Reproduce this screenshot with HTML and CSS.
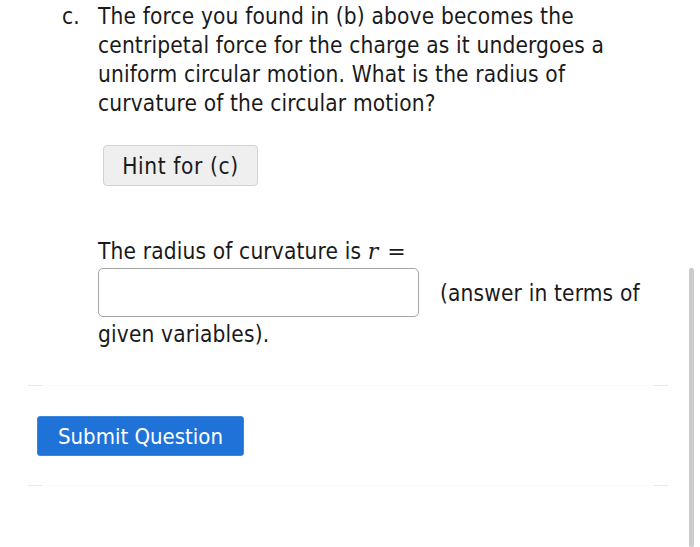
FILE: index.html
```html
<!DOCTYPE html>
<html>
<head>
<meta charset="utf-8">
<link rel="stylesheet" href="styles.css">
</head>
<body>
<div class="page">
  <div class="item">
    <span class="marker">c.</span>
    <div class="content">
      <p class="question">The force you found in (b) above becomes the centripetal force for the charge as it undergoes a uniform circular motion. What is the radius of curvature of the circular motion?</p>
      <button class="hint">Hint for (c)</button>
      <div class="answer">
        <span>The radius of curvature is <span class="math"><i>r</i> =</span></span>
        <input class="box" type="text"><span class="after">(answer in terms of</span>
        <span>given variables).</span>
      </div>
    </div>
  </div>
  <div class="rule first"></div>
  <button class="submit">Submit Question</button>
  <div class="rule second"></div>
</div>
<div class="scrollbar"></div>
</body>
</html>
```
FILE: styles.css
```css
html, body {
  margin: 0;
  padding: 0;
  background: #fff;
}
body {
  font-family: "DejaVu Sans Condensed", "DejaVu Sans", sans-serif;
  font-size: 22.5px;
  letter-spacing: 0.15px;
  color: #1a1a1a;
  width: 700px;
  height: 547px;
  overflow: hidden;
  position: relative;
}
.page {
  padding-top: 2px;
}
.item {
  display: flex;
  padding-left: 62px;
}
.marker {
  width: 36px;
  line-height: 29px;
  flex: none;
}
.content {
  width: 522px;
}
.question {
  margin: 0;
  line-height: 29px;
}
.hint {
  display: block;
  margin: 27px 0 0 5px;
  height: 41px;
  width: 155px;
  padding: 0;
  font: inherit;
  letter-spacing: 0.6px;
  color: #1a1a1a;
  background: #efefef;
  border: 1px solid #d2d2d2;
  border-radius: 4px;
}
.answer {
  margin-top: 51px;
  line-height: 29px;
  width: 570px;
}
.math {
  font-family: "DejaVu Serif", "Liberation Serif", serif;
  font-size: 22px;
  letter-spacing: 0;
}
.math i {
  margin-right: 2px;
}
.box {
  display: inline-block;
  vertical-align: middle;
  box-sizing: border-box;
  width: 321px;
  height: 49px;
  margin: 2px 0 3px 0;
  border: 1px solid #a5a5a5;
  border-radius: 5px;
  background: #fff;
}
.after {
  margin-left: 21px;
  vertical-align: middle;
}
.rule {
  height: 1px;
  background: linear-gradient(to right, #e8e8e8 0, #e8e8e8 14px, #fbfbfb 14px, #fbfbfb 626px, #e8e8e8 626px);
  margin-left: 28px;
  width: 640px;
}
.first {
  margin-top: 36px;
}
.submit {
  display: block;
  margin: 30px 0 0 37px;
  height: 40px;
  width: 207px;
  padding: 0;
  font: inherit;
  font-size: 22px;
  color: #fff;
  background: #1f73d8;
  border: 1px solid #3d86dd;
  border-radius: 3px;
}
.second {
  margin-top: 29px;
}
.scrollbar {
  position: absolute;
  left: 689px;
  top: 268px;
  width: 5px;
  height: 279px;
  background: #cbcbcb;
  border-radius: 2px;
}
```
